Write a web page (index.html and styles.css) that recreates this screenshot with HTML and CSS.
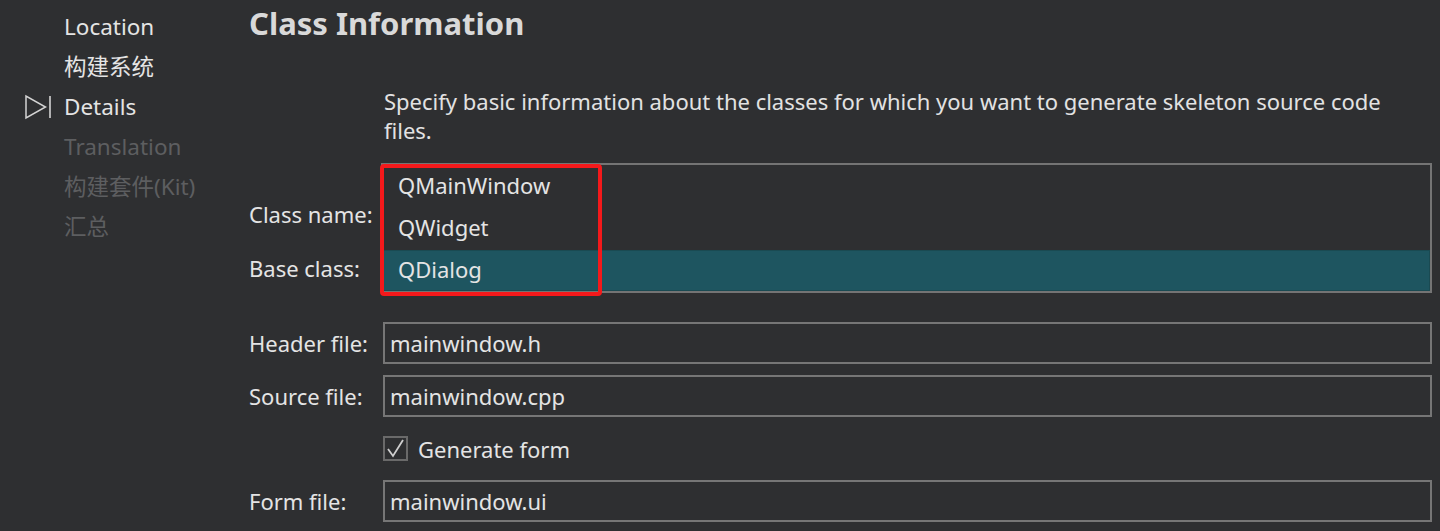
FILE: index.html
```html
<!DOCTYPE html>
<html lang="zh-CN">
<head>
    <meta charset="UTF-8">
    <title>Class Information</title>
    <link rel="stylesheet" href="styles.css">
</head>
<body>
    <div class="wizard">
        <ul class="steps">
            <li class="step">Location</li>
            <li class="step">构建系统</li>
            <li class="step current">
                <svg class="marker" width="28" height="26" viewBox="0 0 28 26">
                    <path d="M2 2 L2 24 L21.5 13 Z" fill="none" stroke="#d4d4d4" stroke-width="1.5" stroke-linejoin="miter"/>
                    <path d="M26 2 L26 24" stroke="#d4d4d4" stroke-width="1.6"/>
                </svg>
                Details
            </li>
            <li class="step todo">Translation</li>
            <li class="step todo">构建套件(Kit)</li>
            <li class="step todo">汇总</li>
        </ul>

        <div class="page">
            <h1 class="title">Class Information</h1>
            <p class="intro">Specify basic information about the classes for which you want to generate skeleton source code files.</p>

            <div class="class-rows">
                <div class="class-labels">
                    <span class="label">Class name:</span>
                    <span class="label">Base class:</span>
                </div>
                <div class="popup">
                    <div class="option">QMainWindow</div>
                    <div class="option">QWidget</div>
                    <div class="option selected">QDialog</div>
                    <div class="highlight"></div>
                </div>
            </div>

            <div class="form">
                <span class="label">Header file:</span>
                <div class="field">mainwindow.h</div>

                <span class="label">Source file:</span>
                <div class="field">mainwindow.cpp</div>

                <span></span>
                <label class="check">
                    <span class="box">
                        <svg width="21" height="21" viewBox="0 0 21 21">
                            <path d="M3 11 L8 18 L18 2" fill="none" stroke="#cfcfcf" stroke-width="1.8"/>
                        </svg>
                    </span>
                    Generate form
                </label>

                <span class="label">Form file:</span>
                <div class="field">mainwindow.ui</div>
            </div>
        </div>
    </div>
</body>
</html>
```

FILE: styles.css
```css
* {
    margin: 0;
    padding: 0;
    box-sizing: border-box;
}

body {
    background: #2e2f31;
    color: #e2e2e2;
    font-family: "Noto Sans", "Noto Sans CJK SC", sans-serif;
    overflow: hidden;
}

.wizard {
    display: flex;
    height: 531px;
}

/* left side step list */
.steps {
    list-style: none;
    width: 249px;
    flex-shrink: 0;
    padding-top: 7px;
}

.step {
    position: relative;
    height: 40px;
    line-height: 40px;
    padding-left: 64px;
    font-size: 22.5px;
    color: #e4e4e4;
}

.step.todo {
    color: #5d5e60;
}

.marker {
    position: absolute;
    left: 24px;
    top: 7px;
}

/* right side page */
.page {
    flex: 1;
    padding-right: 8px;
}

.title {
    font-size: 31px;
    font-weight: bold;
    color: #d9d9d9;
    line-height: 44px;
    margin-top: 1px;
}

.intro {
    margin-top: 42px;
    margin-left: 135px;
    max-width: 1030px;
    font-size: 22px;
    line-height: 29px;
    color: #e2e2e2;
}

.label {
    font-size: 22px;
    color: #e4e4e4;
}

.class-rows {
    display: flex;
    margin-top: 18px;
}

.class-labels {
    width: 132px;
    display: flex;
    flex-direction: column;
    padding-top: 36px;
    gap: 24px;
    line-height: 30px;
}

.popup {
    position: relative;
    flex: 1;
    height: 130px;
    border: 2px solid #747474;
}

.option {
    height: 42px;
    line-height: 40px;
    padding-left: 15px;
    font-size: 22px;
    color: #e4e4e4;
}

.option.selected {
    margin-top: 1px;
    background: #1e5560;
    border: 1px solid #1a4a52;
    height: 41px;
    line-height: 37px;
    padding-left: 14px;
}

/* red annotation box */
.highlight {
    position: absolute;
    left: -3px;
    top: -1px;
    width: 222px;
    height: 132px;
    border: 4px solid #f4191b;
    border-radius: 4px;
}

.form {
    display: grid;
    grid-template-columns: 134px 1fr;
    grid-template-rows: 42px 42px 41px 42px;
    row-gap: 11px;
    align-items: center;
    margin-top: 29px;
}

.field {
    height: 42px;
    line-height: 38px;
    border: 2px solid #767676;
    padding-left: 5px;
    font-size: 22px;
    color: #e4e4e4;
}

.check {
    display: flex;
    align-items: center;
    gap: 10px;
    font-size: 22px;
    color: #e4e4e4;
}

.box {
    width: 25px;
    height: 25px;
    border: 2px solid #6a6a6a;
    display: flex;
    align-items: center;
    justify-content: center;
}
```
